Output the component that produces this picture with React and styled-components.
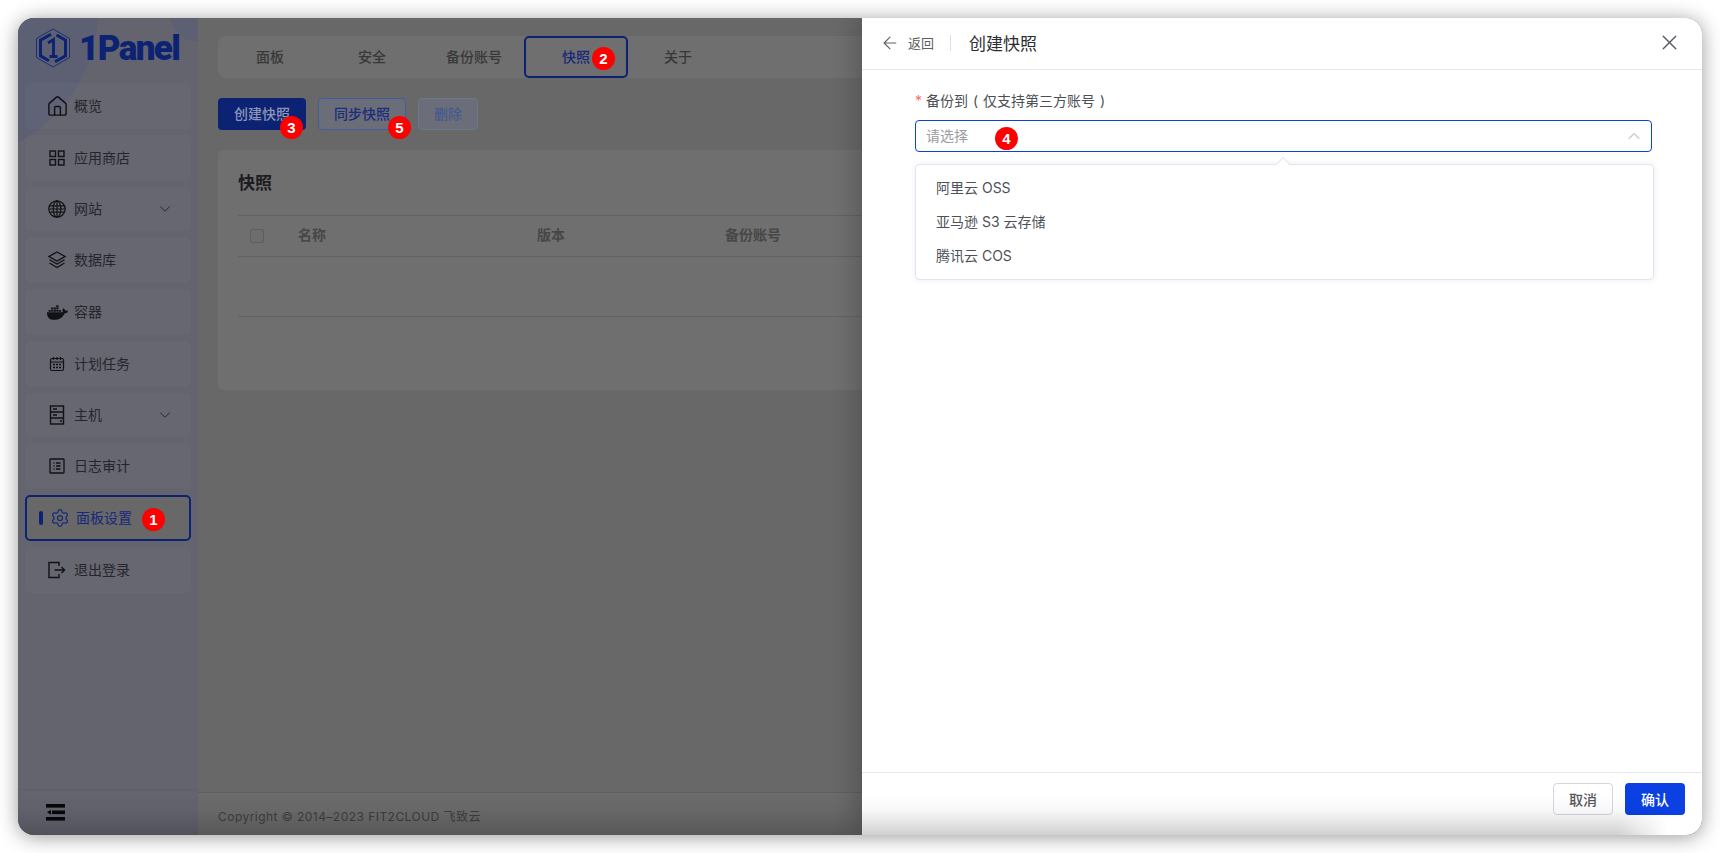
import React from 'react';
import styled, { createGlobalStyle } from 'styled-components';
import { House, Settings, ChevronDown, ChevronUp, X, ArrowLeft } from 'lucide-react';
import { FaDocker } from 'react-icons/fa';

const GlobalStyle = createGlobalStyle`
  html, body {
    margin: 0;
    padding: 0;
    height: 100%;
    background: #fff;
  }
  body {
    font-family: Inter, "Noto Sans CJK SC", sans-serif;
    overflow: hidden;
  }
  * {
    box-sizing: border-box;
  }
  svg {
    flex-shrink: 0;
  }
`;

const Page = styled.div`
  width: 1720px;
  height: 853px;
  padding: 18px;
`;

const Window = styled.div`
  position: relative;
  display: flex;
  width: 1684px;
  height: 817px;
  border-radius: 16px;
  overflow: hidden;
  background: #686868;
  box-shadow: 0 2px 20px rgba(0, 0, 0, 0.4);

  &::after {
    content: '';
    position: absolute;
    left: 0;
    right: 0;
    bottom: 0;
    height: 40px;
    pointer-events: none;
    z-index: 2;
    background: linear-gradient(180deg, rgba(0, 0, 0, 0) 0%, rgba(0, 0, 0, 0.03) 40%, rgba(0, 0, 0, 0.18) 100%);
    mask-image: linear-gradient(90deg, #000 95%, transparent 98%);
  }
`;

const Sidebar = styled.aside`
  position: relative;
  display: flex;
  flex-direction: column;
  flex: 0 0 180px;
  background: #63646e;
  overflow: hidden;
`;

const BigCircle = styled.div`
  position: absolute;
  left: -220px;
  top: -158px;
  width: 300px;
  height: 300px;
  border-radius: 50%;
  background: #5d6073;
`;

const SmallCircle = styled.div`
  position: absolute;
  left: 152px;
  top: -32px;
  width: 56px;
  height: 56px;
  border-radius: 50%;
  background: #5d6073;
`;

const Brand = styled.div`
  position: relative;
  display: flex;
  align-items: center;
  gap: 8px;
  height: 65px;
  padding: 0 0 5px 17px;
  color: #0c2272;
`;

const BrandName = styled.span`
  font-family: Roboto, sans-serif;
  font-size: 35px;
  font-weight: 900;
  letter-spacing: -1.6px;
  line-height: 1;
`;

const NavList = styled.nav`
  position: relative;
  display: flex;
  flex-direction: column;
  gap: 6px;
  padding: 0 7px;
`;

const NavItem = styled.div`
  position: relative;
  display: flex;
  align-items: center;
  height: ${p => (p.$short ? 44 : 46)}px;
  padding-left: ${p => (p.$active ? 12 : 23)}px;
  border-radius: 5px;
  font-size: 14px;
  color: ${p => (p.$active ? '#17297a' : '#25262b')};
  background: ${p => (p.$active ? '#686868' : 'rgba(255, 255, 255, 0.022)')};
  border: ${p => (p.$active ? '2px solid #0c2272' : 'none')};
`;

const NavLabel = styled.span`
  padding-bottom: 2px;
`;

const ActiveBar = styled.span`
  flex: 0 0 4px;
  height: 14px;
  margin-right: 8px;
  border-radius: 2px;
  background: #0c2272;
`;

const NavIcon = styled.span`
  display: flex;
  align-items: center;
  justify-content: center;
  flex: 0 0 18px;
  min-width: 0;
  height: 18px;
  margin-right: ${p => (p.$active ? 7 : 8)}px;
  color: #111215;
`;

const NavCaret = styled.span`
  position: absolute;
  right: 17px;
  top: 50%;
  display: flex;
  transform: translateY(-50%);
  color: #25262b;
`;

const Collapse = styled.div`
  display: flex;
  align-items: center;
  height: 46px;
  margin-top: auto;
  padding-left: 28px;
  border-top: 1px solid #5e5f68;
  color: #08080a;
`;

const Main = styled.main`
  display: flex;
  flex-direction: column;
  flex: 1;
  min-width: 0;
`;

const Content = styled.div`
  display: flex;
  flex-direction: column;
  flex: 1;
  padding: 18px 20px 0;
`;

const Tabs = styled.div`
  display: flex;
  align-items: center;
  height: 42px;
  padding-left: 1px;
  border-radius: 8px;
  background: #6f6f6f;
`;

const Tab = styled.div`
  position: relative;
  display: flex;
  align-items: center;
  justify-content: center;
  flex: 0 0 102px;
  height: 42px;
  padding-bottom: 2px;
  font-size: 14px;
  font-weight: 500;
  color: ${p => (p.$active ? '#17297a' : '#383838')};
  ${p => p.$active && `
    border: 2px solid #0c2272;
    border-radius: 5px;
    flex-basis: 104px;
    margin: 0 -1px;
  `}
`;

const Toolbar = styled.div`
  display: flex;
  gap: 12px;
  margin-top: 20px;
`;

const ToolButton = styled.div`
  position: relative;
  display: flex;
  align-items: center;
  justify-content: center;
  width: ${p => (p.$narrow ? 60 : 88)}px;
  height: 32px;
  padding-bottom: 2px;
  border-radius: 4px;
  font-size: 14px;
  font-weight: 500;
  ${p => p.$kind === 'primary' && `
    background: #0c2272;
    color: #8c96b8;
  `}
  ${p => p.$kind === 'plain' && `
    background: #6b6e78;
    border: 1px solid #3f5c9c;
    color: #1a2c7c;
  `}
  ${p => p.$kind === 'disabled' && `
    background: #6b6e78;
    border: 1px solid #6a7892;
    color: #46598f;
  `}
`;

const Card = styled.section`
  height: 240px;
  margin-top: 20px;
  padding: 0 20px;
  border-radius: 6px;
  background: #6f6f6f;
`;

const CardTitle = styled.div`
  display: flex;
  align-items: center;
  height: 65px;
  padding: 0 0 2px 0;
  font-size: 17px;
  font-weight: 700;
  color: #1d1d1f;
`;

const HeadRow = styled.div`
  position: relative;
  height: 42px;
  border-top: 1px solid #636363;
  border-bottom: 1px solid #636363;
`;

const HeadCell = styled.span`
  position: absolute;
  left: ${p => p.$left}px;
  top: 8px;
  font-size: 14px;
  font-weight: 600;
  color: #474747;
`;

const Check = styled.span`
  position: absolute;
  left: 12px;
  top: 13px;
  width: 14px;
  height: 14px;
  border: 1px solid #5e5e5e;
  border-radius: 2px;
  background: #6d6d6d;
`;

const EmptyRow = styled.div`
  height: 60px;
  border-bottom: 1px solid #636363;
`;

const PageFooter = styled.footer`
  display: flex;
  align-items: center;
  height: 43px;
  padding: 3px 0 0 20px;
  border-top: 1px solid #5f5f5f;
  background: #6b6b6b;
  font-size: 12px;
  letter-spacing: 0.46px;
  color: #3e3e3e;
`;

const Drawer = styled.div`
  position: absolute;
  top: 0;
  right: 0;
  bottom: 0;
  display: flex;
  flex-direction: column;
  width: 840px;
  background: #fff;
  box-shadow: -8px 0 20px rgba(0, 0, 0, 0.18);
`;

const DrawerHeader = styled.header`
  display: flex;
  align-items: center;
  height: 52px;
  padding: 0 20px 2px 18px;
  border-bottom: 1px solid #e9e9ec;
`;

const BackLink = styled.div`
  display: flex;
  align-items: center;
  gap: 8px;
  font-size: 13px;
  color: #5c5e64;
`;

const HeaderDivider = styled.span`
  width: 1px;
  height: 16px;
  margin: 0 18px 0 16px;
  background: #dcdfe6;
`;

const DrawerTitle = styled.div`
  flex: 1;
  font-size: 17px;
  color: #2c2d31;
`;

const DrawerBody = styled.div`
  flex: 1;
  padding: 20px 50px 0 53px;
`;

const FieldLabel = styled.label`
  display: block;
  height: 22px;
  font-size: 14px;
  line-height: 22px;
  word-spacing: 1px;
  color: #4d4f56;
`;

const Required = styled.span`
  margin-right: 4px;
  color: #f56c6c;
`;

const Select = styled.div`
  position: relative;
  display: flex;
  align-items: center;
  justify-content: space-between;
  width: 737px;
  height: 32px;
  margin-top: 8px;
  padding: 0 7px 0 10px;
  border: 1px solid #0b41dd;
  border-radius: 4px;
  font-size: 14px;
  color: #9a9ca3;
`;

const Placeholder = styled.span`
  padding-bottom: 2px;
`;

const Menu = styled.div`
  position: relative;
  width: 739px;
  margin-top: 12px;
  padding: 6px 0;
  border: 1px solid #e1e3ef;
  border-radius: 4px;
  background: #fff;
  box-shadow: 0 0 6px rgba(30, 40, 90, 0.08);
`;

const MenuArrow = styled.span`
  position: absolute;
  left: 362px;
  top: -6px;
  width: 10px;
  height: 10px;
  border-left: 1px solid #e1e3ef;
  border-top: 1px solid #e1e3ef;
  background: #fff;
  transform: rotate(45deg);
`;

const MenuItem = styled.div`
  display: flex;
  align-items: center;
  height: 34px;
  padding: 0 0 2px 20px;
  font-size: 14px;
  color: #4f5158;
`;

const DrawerFooter = styled.footer`
  display: flex;
  align-items: center;
  justify-content: flex-end;
  gap: 12px;
  height: 63px;
  padding: 0 17px 10px 0;
  border-top: 1px solid #e9e9ec;
`;

const FooterButton = styled.div`
  display: flex;
  align-items: center;
  justify-content: center;
  width: 60px;
  height: 32px;
  border-radius: 4px;
  font-size: 14px;
  font-weight: 500;
  ${p => (p.$primary
    ? `background: #0b41e3; color: #fff;`
    : `background: #fff; border: 1px solid #d4d6e2; color: #55575e;`)}
`;

const Badge = styled.span`
  position: absolute;
  display: flex;
  align-items: center;
  justify-content: center;
  width: 23px;
  height: 23px;
  border-radius: 50%;
  background: #fe0000;
  font-family: "Liberation Sans", sans-serif;
  font-size: 15px;
  font-weight: 700;
  color: #fff;
  z-index: 3;
  left: ${p => p.$x}px;
  top: ${p => p.$y}px;
`;

const LogoMark = () => (
  <svg width="36" height="40" viewBox="0 0 36 40" fill="none" stroke="#0c2272">
    <path d="M18 1 L34.5 10.5 V29.5 L18 39 L1.5 29.5 V10.5 Z" strokeWidth="0.8" />
    <path d="M16 6.2 L5.5 12.2 V27.8 L14 32.8 M20 33.8 L30.5 27.8 V12.2 L21.5 7" strokeWidth="3" />
    <path d="M13 15 L18.5 11.5 V28.5 M14.5 28.5 H22.5" strokeWidth="2.8" />
  </svg>
);

const GridIcon = () => (
  <svg width="16" height="16" viewBox="0 0 16 16" fill="none" stroke="currentColor" strokeWidth="1.4">
    <rect x="1" y="1" width="5.5" height="5.5" />
    <rect x="9.5" y="1" width="5.5" height="5.5" />
    <rect x="1" y="9.5" width="5.5" height="5.5" />
    <rect x="9.5" y="9.5" width="5.5" height="5.5" />
  </svg>
);

const GlobeIcon = () => (
  <svg width="18" height="18" viewBox="0 0 18 18" fill="none" stroke="currentColor" strokeWidth="1.2">
    <circle cx="9" cy="9" r="8.2" />
    <ellipse cx="9" cy="9" rx="3.8" ry="8.2" />
    <path d="M9 .8 V17.2 M1.6 5.8 H16.4 M.8 9 H17.2 M1.6 12.2 H16.4" />
  </svg>
);

const LayersIcon = () => (
  <svg width="18" height="18" viewBox="0 0 18 18" fill="none" stroke="currentColor" strokeWidth="1.3">
    <path d="M9 1 L17 5.5 L9 10 L1 5.5 Z" />
    <path d="M1.5 8.8 L9 13 L16.5 8.8" />
    <path d="M1.5 12 L9 16.5 L16.5 12" />
  </svg>
);

const CalendarIcon = () => (
  <svg width="16" height="16" viewBox="0 0 16 16" fill="none" stroke="currentColor" strokeWidth="1.2">
    <rect x="1.5" y="2.5" width="13" height="12" rx="1.5" />
    <path d="M1.5 6 H14.5 M4.5 1 V4 M8 1 V4 M11.5 1 V4" />
    <path d="M4 8.5 H6 M7 8.5 H9 M10 8.5 H12 M4 11.5 H6 M7 11.5 H9 M10 11.5 H12" strokeWidth="1.5" />
  </svg>
);

const ServerIcon = () => (
  <svg width="16" height="20" viewBox="0 0 16 20" fill="none" stroke="currentColor" strokeWidth="1.4">
    <rect x="1.5" y="1" width="13" height="18" />
    <path d="M1.5 7 H14.5 M1.5 13 H14.5 M4 4 H8 M4 10 H8 M11 16 H13" />
  </svg>
);

const LogIcon = () => (
  <svg width="16" height="16" viewBox="0 0 16 16" fill="none" stroke="currentColor" strokeWidth="1.3">
    <rect x="1" y="1" width="14" height="14" rx="0.5" />
    <path d="M4.5 5 H5.5 M7 5 H11.5 M4.5 8 H5.5 M7 8 H11.5 M4.5 11 H5.5 M7 11 H11.5" />
  </svg>
);

const LogoutIcon = () => (
  <svg width="18" height="18" viewBox="0 0 18 18" fill="none" stroke="currentColor" strokeWidth="1.4">
    <path d="M11 5 V1.5 H1 V16.5 H11 V13" />
    <path d="M6.5 9 H16.5 M13.5 6 L16.5 9 L13.5 12" />
  </svg>
);

const CollapseIcon = () => (
  <svg width="20" height="17" viewBox="0 0 20 17" fill="currentColor">
    <rect x="0" y="0" width="19" height="3.6" />
    <rect x="0" y="13" width="19" height="3.6" />
    <rect x="6" y="6.5" width="13" height="3.6" />
    <path d="M1 8.3 L5 5.8 V10.8 Z" />
  </svg>
);

const navItems = [
  { label: '概览', icon: <House size={23} strokeWidth={1.5} /> },
  { label: '应用商店', icon: <GridIcon /> },
  { label: '网站', icon: <GlobeIcon />, caret: true, short: true },
  { label: '数据库', icon: <LayersIcon /> },
  { label: '容器', icon: <FaDocker size={21} /> },
  { label: '计划任务', icon: <CalendarIcon /> },
  { label: '主机', icon: <ServerIcon />, caret: true, short: true },
  { label: '日志审计', icon: <LogIcon /> },
  { label: '面板设置', icon: <Settings size={20} strokeWidth={1.5} color="#17297a" />, active: true },
  { label: '退出登录', icon: <LogoutIcon /> },
];

const tabs = ['面板', '安全', '备份账号', '快照', '关于'];
const options = ['阿里云 OSS', '亚马逊 S3 云存储', '腾讯云 COS'];

export default function App() {
  return (
    <>
      <GlobalStyle />
      <Page>
        <Window>
          <Sidebar>
            <BigCircle />
            <SmallCircle />
            <Brand>
              <LogoMark />
              <BrandName>1Panel</BrandName>
            </Brand>
            <NavList>
              {navItems.map(item => (
                <NavItem key={item.label} $active={item.active} $short={item.short}>
                  {item.active && <ActiveBar />}
                  <NavIcon $active={item.active}>{item.icon}</NavIcon>
                  <NavLabel>{item.label}</NavLabel>
                  {item.caret && (
                    <NavCaret>
                      <ChevronDown size={18} strokeWidth={1.3} />
                    </NavCaret>
                  )}
                </NavItem>
              ))}
            </NavList>
            <Collapse>
              <CollapseIcon />
            </Collapse>
          </Sidebar>
          <Main>
            <Content>
              <Tabs>
                {tabs.map(tab => (
                  <Tab key={tab} $active={tab === '快照'}>{tab}</Tab>
                ))}
              </Tabs>
              <Toolbar>
                <ToolButton $kind="primary">创建快照</ToolButton>
                <ToolButton $kind="plain">同步快照</ToolButton>
                <ToolButton $kind="disabled" $narrow>删除</ToolButton>
              </Toolbar>
              <Card>
                <CardTitle>快照</CardTitle>
                <HeadRow>
                  <Check />
                  <HeadCell $left={60}>名称</HeadCell>
                  <HeadCell $left={299}>版本</HeadCell>
                  <HeadCell $left={487}>备份账号</HeadCell>
                </HeadRow>
                <EmptyRow />
              </Card>
            </Content>
            <PageFooter>Copyright © 2014–2023 FIT2CLOUD 飞致云</PageFooter>
          </Main>
          <Drawer>
            <DrawerHeader>
              <BackLink>
                <ArrowLeft size={20} strokeWidth={1.3} />
                返回
              </BackLink>
              <HeaderDivider />
              <DrawerTitle>创建快照</DrawerTitle>
              <X size={25} strokeWidth={1.4} color="#5c5e64" />
            </DrawerHeader>
            <DrawerBody>
              <FieldLabel><Required>*</Required>备份到 ( 仅支持第三方账号 )</FieldLabel>
              <Select>
                <Placeholder>请选择</Placeholder>
                <ChevronUp size={20} strokeWidth={1.3} color="#c8c8cc" />
              </Select>
              <Menu>
                <MenuArrow />
                {options.map(option => (
                  <MenuItem key={option}>{option}</MenuItem>
                ))}
              </Menu>
            </DrawerBody>
            <DrawerFooter>
              <FooterButton>取消</FooterButton>
              <FooterButton $primary>确认</FooterButton>
            </DrawerFooter>
          </Drawer>
          <Badge $x={124} $y={490}>1</Badge>
          <Badge $x={574} $y={29}>2</Badge>
          <Badge $x={262} $y={98}>3</Badge>
          <Badge $x={370} $y={98}>5</Badge>
          <Badge $x={977} $y={109}>4</Badge>
        </Window>
      </Page>
    </>
  );
}
